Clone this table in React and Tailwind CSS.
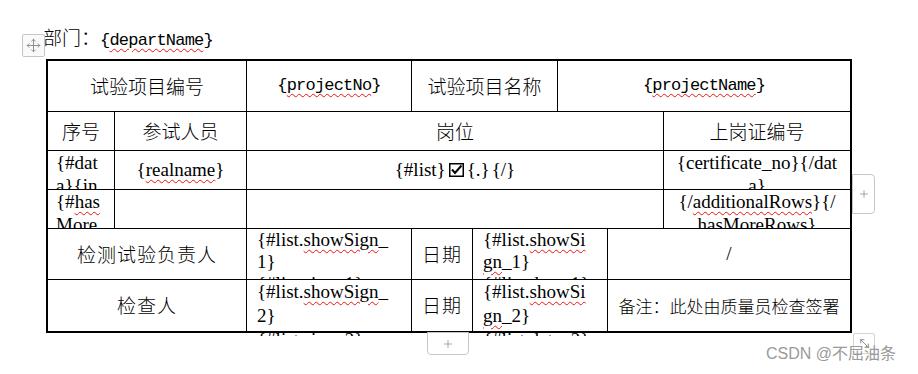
import React from "react";
import { Move, Plus, MoveDiagonal2 } from "lucide-react";

const cjk = "font-['Noto_Sans_CJK_SC',sans-serif] font-light";
const serif = "font-['Liberation_Serif','Noto_Sans_CJK_SC',serif]";
const mono = "font-['Liberation_Mono','Noto_Sans_CJK_SC',monospace] text-[17px] tracking-[-0.8px]";
const wavy = "underline decoration-wavy decoration-[#e11] decoration-1 underline-offset-[3px]";

function Check() {
  return (
    <svg width="15" height="14" viewBox="0 0 15 14" className="inline-block mx-[3px] align-[-1px]">
      <rect x="0.75" y="0.75" width="13.5" height="12.5" fill="none" stroke="#000" strokeWidth="1.5" />
      <path d="M3 6.5 L6 10 L12.5 2.5" fill="none" stroke="#000" strokeWidth="2" />
    </svg>
  );
}

export default function App() {
  return (
    <div className="relative w-[918px] h-[374px] bg-white overflow-hidden text-black">
      {/* header line */}
      <div className="h-[59px] pl-[43px] pt-[24px] leading-[26px] whitespace-nowrap">
        <span className={`${cjk} text-[19px]`}>部门：</span>
        <span className={mono}>
          {"{"}
          <span className={wavy}>departName</span>
          {"}"}
        </span>
      </div>

      {/* table */}
      <div className="ml-[46px] w-[806px] border-2 border-black">
        {/* row 1 */}
        <div className="flex h-[51px] border-b border-black">
          <div className={`w-[199px] border-r border-black flex items-center justify-center ${cjk} text-[19px]`}>试验项目编号</div>
          <div className={`w-[165px] border-r border-black flex items-center justify-center ${mono}`}>
            {"{"}<span className={wavy}>projectNo</span>{"}"}
          </div>
          <div className={`w-[146px] border-r border-black flex items-center justify-center ${cjk} text-[19px]`}>试验项目名称</div>
          <div className={`flex-1 flex items-center justify-center ${mono}`}>
            {"{"}<span className={wavy}>projectName</span>{"}"}
          </div>
        </div>

        {/* row 2 */}
        <div className={`flex h-[39px] border-b border-black ${cjk} text-[19px]`}>
          <div className="w-[67px] border-r border-black flex items-center justify-center">序号</div>
          <div className="w-[132px] border-r border-black flex items-center justify-center">参试人员</div>
          <div className="w-[417px] border-r border-black flex items-center justify-center">岗位</div>
          <div className="flex-1 flex items-center justify-center">上岗证编号</div>
        </div>

        {/* row 3 */}
        <div className={`flex h-[39px] border-b border-black ${serif} text-[19px]`}>
          <div className="w-[67px] border-r border-black overflow-hidden pl-[8px]">
            <div className="w-[47px] break-all leading-[23px]">{"{#data}{index}"}</div>
          </div>
          <div className="w-[132px] border-r border-black flex items-center justify-center">
            {"{"}<span className={wavy}>realname</span>{"}"}
          </div>
          <div className="w-[417px] border-r border-black flex items-center justify-center whitespace-nowrap">
            {"{#list}"}<Check />{"{.}"}<span className="ml-[2px]">{"{/}"}</span>
          </div>
          <div className="flex-1 overflow-hidden px-[11px]">
            <div className="break-all leading-[23px] text-center">{"{certificate_no}{/data}"}</div>
          </div>
        </div>

        {/* row 4 */}
        <div className={`flex h-[39px] border-b border-black ${serif} text-[19px]`}>
          <div className="w-[67px] border-r border-black overflow-hidden pl-[8px]">
            <div className="w-[47px] break-all leading-[23px]">
              {"{#"}<span className={wavy}>hasMoreRows</span>{"}{#additionalRows}"}
            </div>
          </div>
          <div className="w-[132px] border-r border-black"></div>
          <div className="w-[417px] border-r border-black"></div>
          <div className="flex-1 overflow-hidden px-[11px]">
            <div className="break-all leading-[23px] text-center">
              {"{/"}<span className={wavy}>additionalRows</span>{"}{/hasMoreRows}"}
            </div>
          </div>
        </div>

        {/* row 5 */}
        <div className={`flex h-[51px] border-b border-black ${serif} text-[19px]`}>
          <div className={`w-[199px] border-r border-black flex items-center justify-center ${cjk} tracking-[1px]`}>检测试验负责人</div>
          <div className="w-[165px] border-r border-black overflow-hidden pl-[10px]">
            <div className="w-[136px] break-all leading-[22px]">
              {"{#list."}<span className={wavy}>showSign</span>{"_1}"}<br />{"{#list.sign_1}"}
            </div>
          </div>
          <div className={`w-[61px] border-r border-black flex items-center justify-center ${cjk} tracking-[1px]`}>日期</div>
          <div className="w-[135px] border-r border-black overflow-hidden pl-[10px]">
            <div className="w-[108px] break-all leading-[22px]">
              {"{#list."}<span className={wavy}>showSign</span>{"_1}"}<br />{"{#list.date_1}"}
            </div>
          </div>
          <div className="flex-1 flex items-center justify-center">/</div>
        </div>

        {/* row 6 */}
        <div className={`flex h-[51px] ${serif} text-[19px]`}>
          <div className={`w-[199px] border-r border-black flex items-center justify-center ${cjk} tracking-[1px]`}>检查人</div>
          <div className="w-[165px] border-r border-black pl-[10px]">
            <div className="w-[136px] h-[56px] overflow-hidden break-all leading-[24px]">
              {"{#list."}<span className={wavy}>showSign</span>{"_2}"}<br />{"{#list.sign_2}"}
            </div>
          </div>
          <div className={`w-[61px] border-r border-black flex items-center justify-center ${cjk} tracking-[1px]`}>日期</div>
          <div className="w-[135px] border-r border-black pl-[10px]">
            <div className="w-[108px] h-[56px] overflow-hidden break-all leading-[24px]">
              {"{#list."}<span className={wavy}>showSign</span>{"_2}"}<br />{"{#list.date_2}"}
            </div>
          </div>
          <div className={`flex-1 flex items-center justify-center ${cjk} text-[17px]`}>备注：此处由质量员检查签署</div>
        </div>
      </div>

      {/* move handle */}
      <div className="absolute left-[22px] top-[34px] w-[23px] h-[23px] border border-[#c6c6c6] rounded-[2px] bg-[#fafafa] flex items-center justify-center">
        <Move size={15} strokeWidth={1.5} color="#8a8a8a" />
      </div>

      {/* right add button */}
      <div className="absolute left-[852px] top-[174px] w-[23px] h-[40px] border border-[#c6c6c6] rounded-r-[4px] bg-white flex items-center justify-center">
        <Plus size={12} strokeWidth={1.25} color="#777" />
      </div>

      {/* bottom add button */}
      <div className="absolute left-[427px] top-[332px] w-[42px] h-[23px] border border-[#c6c6c6] rounded-b-[4px] bg-white flex items-center justify-center">
        <Plus size={12} strokeWidth={1.25} color="#777" />
      </div>

      {/* resize handle */}
      <div className="absolute left-[853px] top-[333px] w-[22px] h-[21px] border border-[#d4d4d4] rounded-[2px] bg-white flex items-center justify-center">
        <MoveDiagonal2 size={13} strokeWidth={1.5} color="#777" />
      </div>

      {/* watermark */}
      <div className="absolute left-[766px] top-[343px] whitespace-nowrap text-[16px] leading-[22px] text-[#9a9a9a] font-['Liberation_Sans','Noto_Sans_CJK_SC',sans-serif]">
        CSDN @不屈油条
      </div>
    </div>
  );
}
